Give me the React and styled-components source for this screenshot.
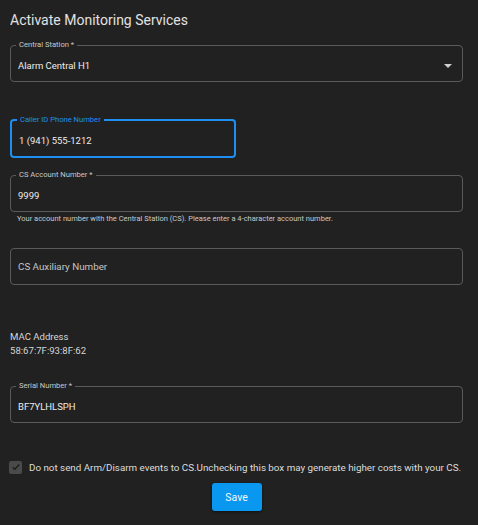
import styled, { createGlobalStyle } from 'styled-components';

const GlobalStyle = createGlobalStyle`
  body {
    margin: 0;
    background: #212121;
    font-family: Roboto, "Liberation Sans", sans-serif;
  }
`;

const Page = styled.div`
  width: 453px;
  padding: 10px 0 13px 10px;
  display: flex;
  flex-direction: column;
`;

const Title = styled.h1`
  margin: 0;
  font-size: 14px;
  line-height: 20px;
  font-weight: 400;
  color: #e2e2e2;
  transform: scaleY(1.08);
  transform-origin: left center;
`;

const Outlined = styled.fieldset`
  margin: ${(p) => p.$top}px 0 0;
  padding: 0 0 0 5px;
  width: ${(p) => (p.$half ? '226px' : '453px')};
  box-sizing: border-box;
  border: ${(p) => (p.$focus ? '2px solid #1e8ff0' : '1px solid #5a5a5a')};
  border-radius: 4px;
  min-width: 0;
`;

const Legend = styled.legend`
  padding: 0 3px;
  font-size: 7.6px;
  line-height: 10px;
  color: ${(p) => (p.$focus ? '#1e8ff0' : '#c8c8c8')};
`;

const Value = styled.div`
  height: 31px;
  display: flex;
  align-items: center;
  justify-content: space-between;
  padding: 0 10px 0 2px;
  font-size: 9.5px;
  color: #ececec;
`;

const Arrow = styled.span`
  width: 0;
  height: 0;
  border-left: 4px solid transparent;
  border-right: 4px solid transparent;
  border-top: 4px solid #cfcfcf;
`;

const Helper = styled.div`
  margin-top: 1px;
  padding-left: 7px;
  font-size: 7.5px;
  line-height: 12px;
  color: #c8c8c8;
`;

const EmptyField = styled.div`
  margin-top: 23px;
  height: 37px;
  box-sizing: border-box;
  border: 1px solid #5a5a5a;
  border-radius: 4px;
  display: flex;
  align-items: center;
  padding-left: 7px;
  font-size: 9.8px;
  color: #c4c4c4;
`;

const InfoLabel = styled.div`
  margin-top: ${(p) => p.$top || 0}px;
  font-size: 9.6px;
  line-height: 14px;
  color: #d6d6d6;
`;

const CheckRow = styled.label`
  margin-top: 34px;
  height: 20px;
  display: flex;
  align-items: center;
  gap: 7px;
  margin-left: -1px;
  font-size: 9.8px;
  color: #dcdcdc;
  white-space: nowrap;
`;

const Box = styled.span`
  width: 13px;
  height: 13px;
  border-radius: 2px;
  background: #4a4a4a;
  display: flex;
  align-items: center;
  justify-content: center;
  flex: none;
`;

const SaveButton = styled.button`
  margin: 6px auto 0;
  width: 50px;
  height: 28px;
  border: none;
  border-radius: 3px;
  background: #0a97ef;
  color: #f4f9ff;
  font-family: inherit;
  font-size: 10.5px;
  box-shadow: 0 1px 3px rgba(0, 0, 0, 0.5);
`;

const Field = ({ label, value, top, half, focus, select }) => (
  <Outlined $top={top} $half={half} $focus={focus}>
    <Legend $focus={focus}>{label}</Legend>
    <Value>
      <span>{value}</span>
      {select && <Arrow />}
    </Value>
  </Outlined>
);

const App = () => (
  <>
    <GlobalStyle />
    <Page>
      <Title>Activate Monitoring Services</Title>
      <Field top={10} label="Central Station *" value="Alarm Central H1" select />
      <Field top={33} half focus label="Caller ID Phone Number" value="1 (941) 555-1212" />
      <Field top={12} label="CS Account Number *" value="9999" />
      <Helper>
        Your account number with the Central Station (CS). Please enter a 4-character account number.
      </Helper>
      <EmptyField>CS Auxiliary Number</EmptyField>
      <InfoLabel $top={45}>MAC Address</InfoLabel>
      <InfoLabel>58:67:7F:93:8F:62</InfoLabel>
      <Field top={23} label="Serial Number *" value="BF7YLHLSPH" />
      <CheckRow>
        <Box>
          <svg width="10" height="10" viewBox="0 0 24 24" fill="none" stroke="#1c1c1c" strokeWidth="3">
            <path d="M4 12.5l5 5L20 6" />
          </svg>
        </Box>
        Do not send Arm/Disarm events to CS.Unchecking this box may generate higher costs with your CS.
      </CheckRow>
      <SaveButton>Save</SaveButton>
    </Page>
  </>
);

export default App;
